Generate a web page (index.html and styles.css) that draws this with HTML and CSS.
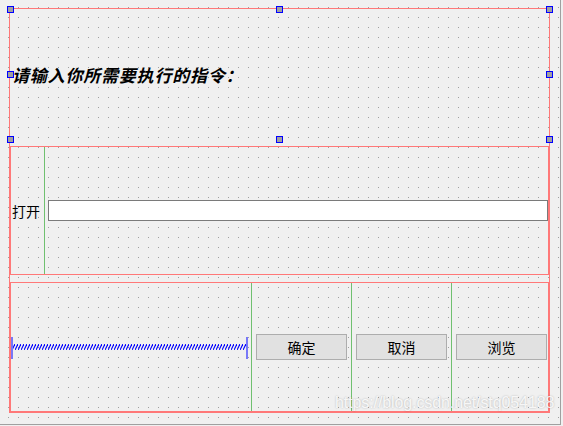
FILE: index.html
```html
<!DOCTYPE html>
<html>
<head>
<meta charset="utf-8">
<link rel="stylesheet" href="styles.css">
</head>
<body>
<div class="form">
  <div class="vlayout">
    <div class="label-box">
      <span class="prompt">请输入你所需要执行的指令：</span>
      <i class="handle h-tl"></i><i class="handle h-tm"></i><i class="handle h-tr"></i>
      <i class="handle h-ml"></i><i class="handle h-mr"></i>
      <i class="handle h-bl"></i><i class="handle h-bm"></i><i class="handle h-br"></i>
    </div>
    <div class="hlayout row-open">
      <div class="open-label">打开</div>
      <div class="line-edit"></div>
    </div>
    <div class="hlayout row-buttons">
      <div class="cell spacer-cell">
        <div class="spacer">
          <svg width="237" height="22" viewBox="0 0 237 22">
            <defs>
              <pattern id="spring" width="3" height="6" patternUnits="userSpaceOnUse" x="1" y="7">
                <path d="M0 6 L3 0" stroke="#0000ff" stroke-width="1.2" fill="none"/>
              </pattern>
            </defs>
            <rect x="0.5" y="0" width="1" height="22" fill="#0000ff"/>
            <rect x="235.5" y="0" width="1" height="22" fill="#0000ff"/>
            <rect x="2" y="7" width="233" height="6" fill="url(#spring)"/>
          </svg>
        </div>
      </div>
      <div class="cell btn-cell"><div class="btn">确定</div></div>
      <div class="cell btn-cell"><div class="btn">取消</div></div>
      <div class="cell btn-cell last"><div class="btn">浏览</div></div>
    </div>
  </div>
  <div class="watermark">https://blog.csdn.net/stq054188</div>
</div>
</body>
</html>
```
FILE: styles.css
```css
html, body {
  margin: 0;
  padding: 0;
  background: #f0f0f0;
}

body {
  width: 563px;
  height: 426px;
  overflow: hidden;
  font-family: "Noto Sans CJK SC", "Noto Sans", sans-serif;
}

.form {
  position: relative;
  width: 561px;
  height: 425px;
  box-sizing: border-box;
  padding: 8px 0 0 9px;
  border-right: 1px solid #a0a0a0;
  border-bottom: 1px solid #a0a0a0;
  background-color: #f0f0f0;
  background-image:
    linear-gradient(to right, #f0f0f0 9px, transparent 9px),
    linear-gradient(to bottom, #f0f0f0 9px, #a0a0a0 9px);
  background-size: 10px 10px;
  background-position: 9px 8px;
}

.vlayout {
  width: 541px;
  height: 405px;
  box-sizing: border-box;
  border: 1px solid #ff7878;
  display: flex;
  flex-direction: column;
}

.label-box {
  position: relative;
  height: 131px;
  flex: none;
  display: flex;
  align-items: center;
  padding-left: 2px;
}

.prompt {
  font-size: 17px;
  font-weight: bold;
  font-style: italic;
  letter-spacing: 0.8px;
  color: #000;
  line-height: 20px;
  margin-top: 0;
}

.handle {
  position: absolute;
  width: 7px;
  height: 7px;
  box-sizing: border-box;
  border: 1px solid #0000ff;
  background: #a0a0a0;
}
.h-tl { left: -3px; top: -3px; }
.h-tm { left: 266px; top: -3px; }
.h-tr { left: 536px; top: -3px; }
.h-ml { left: -3px; top: 62px; }
.h-mr { left: 536px; top: 62px; }
.h-bl { left: -3px; top: 127px; }
.h-bm { left: 266px; top: 127px; }
.h-br { left: 536px; top: 127px; }

.hlayout {
  flex: none;
  box-sizing: border-box;
  border: 1px solid #ff7878;
  display: flex;
  align-items: stretch;
}

.row-open {
  height: 129px;
  margin-top: 6px;
  align-items: center;
}

.open-label {
  align-self: stretch;
  width: 34px;
  border-right: 1px solid #70c070;
  display: flex;
  align-items: center;
  padding-left: 1px;
  padding-top: 1px;
  box-sizing: border-box;
  font-size: 14px;
  color: #000;
}

.line-edit {
  margin-left: 3px;
  width: 500px;
  height: 21px;
  box-sizing: border-box;
  border: 1px solid #7a7a7a;
  background: #fff;
}

.row-buttons {
  height: 130px;
  margin-top: 7px;
}

.cell {
  display: flex;
  align-items: center;
  box-sizing: border-box;
  border-right: 1px solid #70c070;
}

.spacer-cell {
  width: 241px;
}

.spacer {
  display: flex;
  margin-top: 1px;
}

.spacer svg {
  display: block;
}

.btn-cell {
  width: 100px;
  padding-left: 4px;
}

.btn-cell.last {
  width: 96px;
  border-right: none;
}

.btn {
  width: 91px;
  height: 26px;
  box-sizing: border-box;
  border: 1px solid #adadad;
  background: #e1e1e1;
  display: flex;
  align-items: center;
  justify-content: center;
  font-size: 14px;
  color: #000;
}

.watermark {
  position: absolute;
  left: 335px;
  top: 394px;
  font-family: "Liberation Sans", Arial, sans-serif;
  font-size: 16px;
  letter-spacing: -0.1px;
  color: rgba(255, 255, 255, 0.85);
  text-shadow: 0 0 2px rgba(0, 0, 0, 0.25);
  white-space: nowrap;
}
```
